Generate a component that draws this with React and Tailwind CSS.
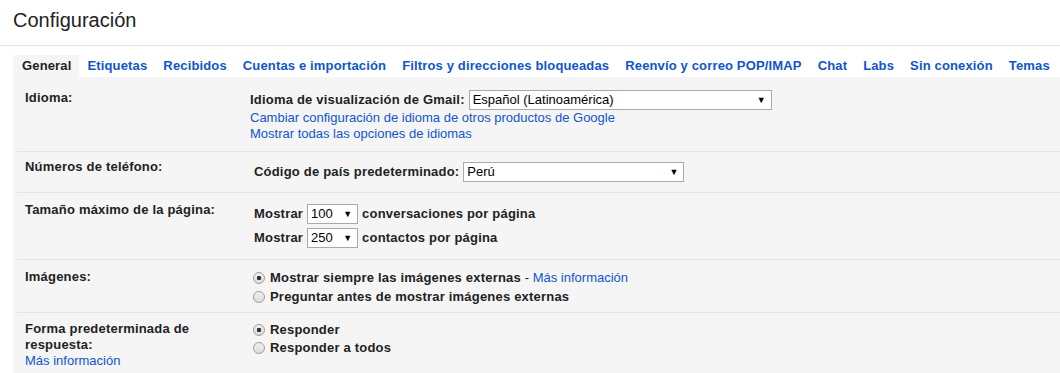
import React from 'react';

const tabs = [
  'General',
  'Etiquetas',
  'Recibidos',
  'Cuentas e importación',
  'Filtros y direcciones bloqueadas',
  'Reenvío y correo POP/IMAP',
  'Chat',
  'Labs',
  'Sin conexión',
  'Temas',
];

function FakeSelect({ value, width }) {
  return (
    <div
      className="flex items-center justify-between h-[20px] bg-white border border-[#a9a9a9] pl-[3px] pr-[5px] font-normal tracking-normal text-[13px] text-black"
      style={{ width }}
    >
      <span>{value}</span>
      <span className="text-[9px] leading-none">▼</span>
    </div>
  );
}

function Radio({ checked }) {
  return (
    <span className="w-[12px] h-[12px] rounded-full border border-[#a0a0a0] bg-gradient-to-b from-[#f0f0f0] to-[#dcdcdc] flex items-center justify-center shrink-0">
      {checked && <span className="w-[4px] h-[4px] rounded-[1px] bg-[#333]" />}
    </span>
  );
}

function Row({ label, labelPt, children, last }) {
  return (
    <div className={`flex ml-[4px] ${last ? '' : 'border-b border-[#e5e5e5]'}`}>
      <div
        className="w-[233px] pl-[8px] pr-[30px] shrink-0 font-bold tracking-[0.2px] leading-[16px]"
        style={{ paddingTop: labelPt }}
      >
        {label}
      </div>
      <div className="flex-1">{children}</div>
    </div>
  );
}

export default function App() {
  return (
    <div className="w-[1060px] h-[373px] overflow-hidden bg-white text-[13px] text-[#222] font-['Liberation_Sans',Arial,sans-serif]">
      {/* Header */}
      <div className="h-[46px] border-b border-[#e5e5e5] px-[13px] pt-[8px]">
        <h1 className="text-[20px] leading-[24px] font-normal text-[#222]">Configuración</h1>
      </div>

      {/* Tabs */}
      <div className="flex mt-[9px] ml-[13px] h-[22px]">
        {tabs.map((t, i) => (
          <div
            key={t}
            className={`flex items-center shrink-0 whitespace-nowrap px-2 font-bold tracking-[0.15px] ${i === 0 ? 'bg-[#f5f5f5] text-[#222] pl-[9px]' : 'text-[#15c]'}`}
          >
            {t}
          </div>
        ))}
      </div>

      {/* Panel */}
      <div className="ml-[13px] bg-[#f5f5f5] h-[300px]">
        <Row label="Idioma:" labelPt={13}>
          <div className="pt-[13px] pb-[9px]">
            <div className="flex items-center gap-[4px] font-bold tracking-[0.2px]">
              <span>Idioma de visualización de Gmail:</span>
              <FakeSelect value="Español (Latinoamérica)" width={303} />
            </div>
            <div className="leading-[16px] text-[#15c]">Cambiar configuración de idioma de otros productos de Google</div>
            <div className="leading-[16px] text-[#15c]">Mostrar todas las opciones de idiomas</div>
          </div>
        </Row>

        <Row label="Números de teléfono:" labelPt={7}>
          <div className="pt-[10px] pb-[10px] pl-[4px] flex items-center gap-[4px] font-bold tracking-[0.2px]">
            <span>Código de país predeterminado:</span>
            <FakeSelect value="Perú" width={221} />
          </div>
        </Row>

        <Row label="Tamaño máximo de la página:" labelPt={9}>
          <div className="pt-[11px] pb-[11px] pl-[4px] flex flex-col gap-[4px] font-bold tracking-[0.2px]">
            <div className="flex items-center gap-[4px]">
              <span>Mostrar</span>
              <FakeSelect value="100" width={51} />
              <span>conversaciones por página</span>
            </div>
            <div className="flex items-center gap-[4px]">
              <span>Mostrar</span>
              <FakeSelect value="250" width={51} />
              <span>contactos por página</span>
            </div>
          </div>
        </Row>

        <Row label="Imágenes:" labelPt={9}>
          <div className="pt-[8px] pb-[6px] pl-[3px] font-bold tracking-[0.2px]">
            <div className="flex items-center gap-[5px] h-[19px]">
              <Radio checked />
              <span>
                Mostrar siempre las imágenes externas <span className="font-normal tracking-normal">- </span>
                <span className="font-normal tracking-normal text-[#15c]">Más información</span>
              </span>
            </div>
            <div className="flex items-center gap-[5px] h-[19px]">
              <Radio />
              <span>Preguntar antes de mostrar imágenes externas</span>
            </div>
          </div>
        </Row>

        <Row
          last
          labelPt={8}
          label={
            <>
              Forma predeterminada de respuesta:
              <div className="font-normal tracking-normal text-[#15c]">Más información</div>
            </>
          }
        >
          <div className="pt-[8px] pl-[3px] font-bold tracking-[0.2px]">
            <div className="flex items-center gap-[5px] h-[18px]">
              <Radio checked />
              <span>Responder</span>
            </div>
            <div className="flex items-center gap-[5px] h-[18px]">
              <Radio />
              <span>Responder a todos</span>
            </div>
          </div>
        </Row>
      </div>
    </div>
  );
}
